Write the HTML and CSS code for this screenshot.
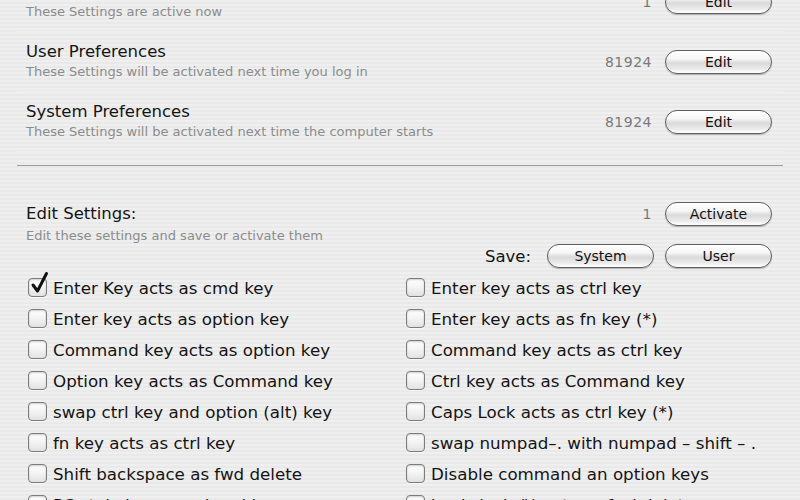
FILE: index.html
```html
<!DOCTYPE html>
<html>
<head>
<meta charset="utf-8">
<link rel="stylesheet" href="styles.css">
</head>
<body>
<div class="window">
  <div class="prefs">
    <div class="pref-row">
      <div class="pref-text">
        <div class="title">Active Settings</div>
        <div class="sub">These Settings are active now</div>
      </div>
      <div class="pref-actions">
        <span class="num">1</span>
        <button class="aqua">Edit</button>
      </div>
    </div>
    <div class="pref-row">
      <div class="pref-text">
        <div class="title">User Preferences</div>
        <div class="sub">These Settings will be activated next time you log in</div>
      </div>
      <div class="pref-actions">
        <span class="num">81924</span>
        <button class="aqua">Edit</button>
      </div>
    </div>
    <div class="pref-row">
      <div class="pref-text">
        <div class="title">System Preferences</div>
        <div class="sub">These Settings will be activated next time the computer starts</div>
      </div>
      <div class="pref-actions">
        <span class="num">81924</span>
        <button class="aqua">Edit</button>
      </div>
    </div>
  </div>

  <hr class="sep">

  <div class="edit">
    <div class="edit-head">
      <div class="title">Edit Settings:</div>
      <div class="pref-actions">
        <span class="num">1</span>
        <button class="aqua">Activate</button>
      </div>
    </div>
    <div class="sub">Edit these settings and save or activate them</div>
    <div class="save-row">
      <span class="save-label">Save:</span>
      <button class="aqua">System</button>
      <button class="aqua">User</button>
    </div>

    <div class="options">
      <label class="opt"><span class="box checked"><svg class="tick" viewBox="0 0 20 24" width="20" height="24"><path d="M4 14 L8.5 20 L17.5 2.5" fill="none" stroke="#111" stroke-width="3" stroke-linecap="round" stroke-linejoin="round"/></svg></span>Enter Key acts as cmd key</label>
      <label class="opt"><span class="box"></span>Enter key acts as ctrl key</label>
      <label class="opt"><span class="box"></span>Enter key acts as option key</label>
      <label class="opt"><span class="box"></span>Enter key acts as fn key (*)</label>
      <label class="opt"><span class="box"></span>Command key acts as option key</label>
      <label class="opt"><span class="box"></span>Command key acts as ctrl key</label>
      <label class="opt"><span class="box"></span>Option key acts as Command key</label>
      <label class="opt"><span class="box"></span>Ctrl key acts as Command key</label>
      <label class="opt"><span class="box"></span>swap ctrl key and option (alt) key</label>
      <label class="opt"><span class="box"></span>Caps Lock acts as ctrl key (*)</label>
      <label class="opt"><span class="box"></span>fn key acts as ctrl key</label>
      <label class="opt"><span class="box"></span>swap numpad–. with numpad – shift – .</label>
      <label class="opt"><span class="box"></span>Shift backspace as fwd delete</label>
      <label class="opt"><span class="box"></span>Disable command an option keys</label>
      <label class="opt"><span class="box"></span>PC style home and end keys</label>
      <label class="opt"><span class="box"></span>backslash (\) acts as fwd delete</label>
    </div>
  </div>
</div>
</body>
</html>
```

FILE: styles.css
```css
html, body {
  margin: 0;
  padding: 0;
  width: 800px;
  height: 500px;
  overflow: hidden;
}

body {
  font-family: "DejaVu Sans", "Liberation Sans", sans-serif;
  color: #141414;
  background-color: #ececec;
  background-image: repeating-linear-gradient(to bottom, #efefef 0px, #efefef 2px, #e9e9e9 2px, #e9e9e9 4px);
}

.window {
  padding: 0 17px;
}

.prefs {
  margin-top: -28px;
}

.pref-row {
  height: 60px;
  display: flex;
  align-items: center;
  justify-content: space-between;
  padding: 0 11px 0 9px;
  border-bottom: 1px solid rgba(255, 255, 255, 0.35);
  box-sizing: border-box;
}

.title {
  font-size: 16.5px;
  line-height: 20px;
  color: #141414;
}

.sub {
  font-size: 13px;
  line-height: 20px;
  color: #8c8c8c;
}

.pref-actions {
  display: flex;
  align-items: center;
  gap: 13px;
}

.num {
  font-size: 14px;
  color: #7a7a7a;
  letter-spacing: 0.5px;
}

.aqua {
  width: 107px;
  height: 24px;
  border: 1px solid #5e5e5e;
  border-radius: 12px;
  background: linear-gradient(to bottom, #ffffff 0%, #f6f6f6 35%, #dadada 55%, #eaeaea 80%, #ffffff 100%);
  box-shadow: 0 1px 1px rgba(0, 0, 0, 0.25);
  font-family: "DejaVu Sans", "Liberation Sans", sans-serif;
  font-size: 14px;
  color: #111;
  padding: 0;
  line-height: 22px;
}

.sep {
  margin: 13px 0 0;
  border: 0;
  border-top: 1px solid #9a9a9a;
  height: 0;
}

.edit {
  padding: 36px 11px 0 9px;
}

.edit-head {
  height: 24px;
  display: flex;
  align-items: center;
  justify-content: space-between;
}

.save-row {
  display: flex;
  justify-content: flex-end;
  align-items: center;
  gap: 11px;
  margin-top: -2px;
}

.save-label {
  font-size: 16.5px;
  margin-right: 5px;
}

.options {
  display: grid;
  grid-template-columns: 378px 1fr;
  grid-auto-rows: 31px;
  margin: 4px 0 0 2px;
}

.opt {
  display: flex;
  align-items: center;
  font-size: 16.7px;
  line-height: 20px;
  white-space: nowrap;
}

.box {
  position: relative;
  width: 17px;
  height: 17px;
  border: 1px solid #7c7c7c;
  border-radius: 4px;
  background: linear-gradient(to bottom, #ffffff 0%, #f3f3f3 50%, #e2e2e2 100%);
  box-shadow: inset 0 1px 2px rgba(0, 0, 0, 0.2), 0 1px 0 rgba(255, 255, 255, 0.6);
  margin-right: 6px;
  flex: none;
}

.tick {
  position: absolute;
  left: 0;
  top: -8px;
}
```
